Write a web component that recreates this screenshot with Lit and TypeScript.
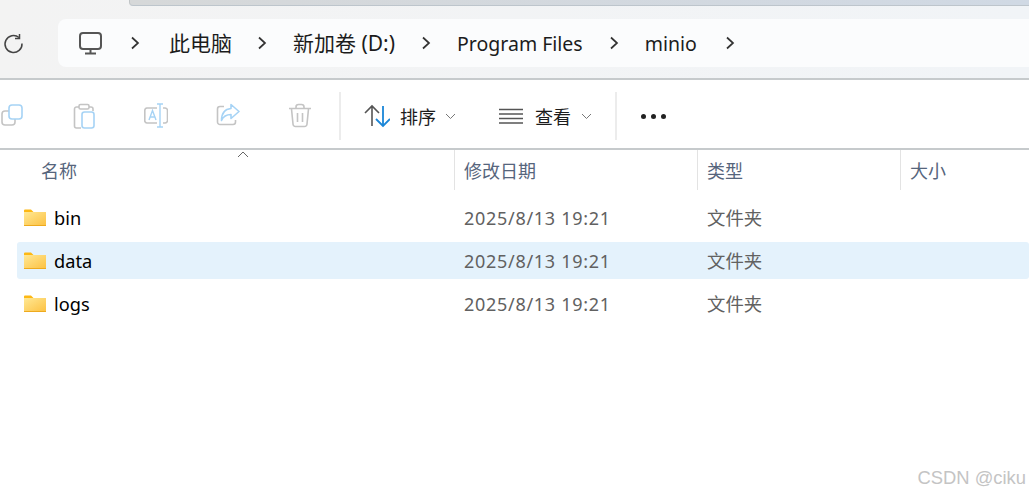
import { css, html, LitElement, svg } from 'lit';
import { customElement } from 'lit/decorators.js';

const files = ['bin', 'data', 'logs'];

const crumbs = [
  { label: '此电脑', cjk: true },
  { label: '新加卷 (D:)', cjk: true },
  { label: 'Program Files', cjk: false },
  { label: 'minio', cjk: false },
];

const chevron = html`<svg class="chevron" width="10" height="14" viewBox="0 0 10 14">
  <path d="M2 1.500 L8 7 L2 12.500" fill="none" stroke="#333" stroke-width="1.700" />
</svg>`;

const caret = html`<svg class="caret" width="11" height="7" viewBox="0 0 11 7">
  <path d="M1 1 L5.500 5.500 L10 1" fill="none" stroke="#777" stroke-width="1" />
</svg>`;

const GREY = '#c4c4c4';
const BLUE = '#a6d3f5';

const toolIcons = [
  svg`<rect x="2" y="8" width="13" height="14" rx="3" fill="none" stroke="${GREY}" stroke-width="1.6"/>
      <rect x="9" y="2" width="13" height="14" rx="3" fill="#fff" stroke="${BLUE}" stroke-width="1.6"/>`,
  svg`<path d="M7 4 H4.500 A2 2 0 0 0 2.500 6 V23 A2 2 0 0 0 4.500 25 H9 M17 4 H19 A2 2 0 0 1 21 6 V8" fill="none" stroke="${GREY}" stroke-width="1.6"/>
      <rect x="7" y="1.500" width="10" height="4.500" rx="1.500" fill="none" stroke="${GREY}" stroke-width="1.6"/>
      <rect x="10" y="9" width="12" height="16" rx="2.500" fill="#fff" stroke="${BLUE}" stroke-width="1.6"/>`,
  svg`<path d="M13 5 H3 A2.500 2.500 0 0 0 .8 7.500 V17 A2.500 2.500 0 0 0 3 20 H13 M19 5 H21 A2.500 2.500 0 0 1 23.500 7.500 V17 A2.500 2.500 0 0 1 21 20 H19" fill="none" stroke="${GREY}" stroke-width="1.6"/>
      <path d="M13 1 H19 M16 1 V24 M13 24 H19 M5 17 L8.500 7.500 L12 17 M6.200 14 H10.800" fill="none" stroke="${BLUE}" stroke-width="1.4"/>`,
  svg`<path d="M8 3.500 H4 A2.500 2.500 0 0 0 1.500 6 V19 A2.500 2.500 0 0 0 4 21.500 H17 A2.500 2.500 0 0 0 19.500 19 V17" fill="none" stroke="${GREY}" stroke-width="1.6"/>
      <path d="M15 1.500 L23 8.500 L15 15.500 V11.500 C10 11.500 7 14 5.500 17.500 C5.500 10.500 9 6 15 5.500 Z" fill="none" stroke="${BLUE}" stroke-width="1.6" stroke-linejoin="round"/>`,
  svg`<path d="M1 5.500 H23 M8 5 V4 A2.500 2.500 0 0 1 10.500 1.500 H13.500 A2.500 2.500 0 0 1 16 4 V5 M3.500 6 L5 21 A2.500 2.500 0 0 0 7.500 23.500 H16.500 A2.500 2.500 0 0 0 19 21 L20.500 6 M9.500 10 V19 M14.500 10 V19" fill="none" stroke="${GREY}" stroke-width="1.6"/>`,
];

const folder = html`<svg class="folder" width="22" height="18" viewBox="0 0 22 18">
  <defs>
    <linearGradient id="folder-fill" x1="0" y1="0" x2="1" y2="1">
      <stop offset="0" stop-color="#ffe894" />
      <stop offset="1" stop-color="#fcc244" />
    </linearGradient>
  </defs>
  <path d="M0 1.500 A1 1 0 0 1 1 .5 H7 L9.500 3 H0 Z" fill="#fdb813" />
  <path d="M0 3 H22 V17 H0 Z" fill="#eeaa1e" />
  <rect x="0" y="3" width="22" height="13" fill="url(#folder-fill)" />
</svg>`;

@customElement('app-root')
export class AppRoot extends LitElement {
  static styles = css`
    :host {
      display: block;
      position: relative;
      width: 1029px;
      height: 495px;
      overflow: hidden;
      background: #fff;
      font-family: 'Noto Sans', 'Noto Sans CJK SC', sans-serif;
      color: #1c1c1c;
    }

    .address-area {
      height: 78px;
      background: linear-gradient(90deg, #f3f3f3, #f1f4f7);
    }

    .tab-edge {
      height: 6px;
      margin-left: 129px;
      box-sizing: border-box;
      background: linear-gradient(90deg, #d6d8d9, #d0d9e4);
      border-bottom: 1px solid #bdc5cc;
      border-left: 1px solid #c0c4c6;
      border-bottom-left-radius: 4px;
    }

    .address-row {
      display: flex;
      align-items: center;
      padding: 13px 0 0 3px;
    }

    .refresh {
      margin-right: 34px;
    }

    .address-bar {
      flex: 1;
      height: 48px;
      display: flex;
      align-items: center;
      padding-left: 21px;
      background: #fbfcfd;
      border-radius: 8px 0 0 8px;
    }

    .pc {
      margin-right: 28px;
    }

    .chevron {
      flex: none;
    }

    .crumb {
      margin: 0 25px 0 29px;
      font-size: 19.500px;
      white-space: nowrap;
    }

    .crumb.cjk {
      font-size: 21px;
      margin-bottom: 2px;
    }

    .crumb:nth-of-type(2),
    .crumb:nth-of-type(3) {
      margin-left: 26px;
      margin-right: 26px;
    }

    .crumb:nth-of-type(4) {
      margin-left: 26px;
      margin-right: 28px;
    }

    .rule {
      height: 2px;
      background: #c6cacc;
    }

    .toolbar {
      height: 68px;
      box-sizing: border-box;
      padding-top: 4px;
      display: flex;
      align-items: center;
      font-size: 18px;
    }

    .tool-icons {
      display: flex;
      gap: 48px;
      width: 339px;
    }

    .divider {
      width: 2px;
      height: 48px;
      background: #ececec;
      flex: none;
    }

    .tool-btn {
      display: flex;
      align-items: center;
    }

    .sort-btn {
      margin-left: 23px;
      width: 251px;
    }

    .sort-btn span {
      margin: 0 9px 0 10px;
    }

    .view-btn span {
      margin: 0 10px 0 12px;
    }

    .sort-btn .group {
      display: flex;
      align-items: center;
      width: 135px;
    }

    .view-btn {
      width: 116px;
    }

    .dots {
      display: flex;
      gap: 5px;
      margin-left: 24px;
    }

    .dots i {
      width: 5px;
      height: 5px;
      border-radius: 50%;
      background: #222;
    }

    .columns {
      display: grid;
      grid-template-columns: 454px 243px 203px 1fr;
    }

    .header {
      height: 40px;
      font-size: 18px;
      color: #56657c;
      position: relative;
    }

    .header div {
      display: flex;
      align-items: center;
      padding-left: 9px;
      border-left: 1px solid #e3e3e3;
    }

    .header div:first-of-type {
      border-left: 0;
      padding-left: 41px;
    }

    .sort-mark {
      position: absolute;
      left: 237px;
      top: 1px;
    }

    .rows {
      padding-top: 9px;
      display: flex;
      flex-direction: column;
      gap: 6px;
      font-size: 18.200px;
    }

    .row {
      height: 37px;
      margin-left: 17px;
      grid-template-columns: 437px 243px 1fr;
      align-items: center;
      border-radius: 3px;
    }

    .row.selected {
      background: #e4f2fc;
    }

    .name {
      display: flex;
      align-items: center;
      gap: 8px;
      padding-left: 7px;
      color: #000;
    }

    .date,
    .type {
      padding-left: 10px;
      color: #616161;
    }

    .date {
      font-size: 18px;
      letter-spacing: 0.700px;
    }

    .type {
      font-size: 18.400px;
      line-height: 24px;
    }

    .watermark {
      position: absolute;
      right: 3px;
      top: 467px;
      font-family: 'Liberation Sans', sans-serif;
      font-size: 18.400px;
      color: #c4c4c4;
    }
  `;

  render() {
    return html`
      <div class="address-area">
        <div class="tab-edge"></div>
        <div class="address-row">
          <svg class="refresh" width="21" height="21" viewBox="0 0 21 21">
            <path d="M16 4.500 A8.500 8.500 0 1 0 19 10.500" fill="none" stroke="#444" stroke-width="1.500" />
            <path d="M16.500 1 V5.500 H12" fill="none" stroke="#444" stroke-width="1.500" />
          </svg>
          <div class="address-bar">
            <svg class="pc" width="23" height="23" viewBox="0 0 23 23">
              <rect x="1" y="1" width="21" height="16" rx="3" fill="none" stroke="#555" stroke-width="2" />
              <path d="M6 21.500 H17 M11.500 17 V21" fill="none" stroke="#555" stroke-width="2" />
            </svg>
            ${chevron}
            ${crumbs.map(
              c => html`<span class="crumb ${c.cjk ? 'cjk' : ''}">${c.label}</span>${chevron}`,
            )}
          </div>
        </div>
      </div>
      <div class="rule"></div>
      <div class="toolbar">
        <div class="tool-icons">
          ${toolIcons.map(
            i => html`<svg width="24" height="26" viewBox="0 0 24 26">${i}</svg>`,
          )}
        </div>
        <div class="divider"></div>
        <div class="tool-btn sort-btn">
          <div class="group">
            <svg width="26" height="24" viewBox="0 0 26 24">
              <path d="M1 9 L8 2 L15 9 M8 2 V22" fill="none" stroke="#555" stroke-width="1.600" />
              <path d="M12 15 L19 22 L26 15 M19 2 V22" fill="none" stroke="#1a86d8" stroke-width="1.800" />
            </svg>
            <span>排序</span>${caret}
          </div>
          <div class="tool-btn view-btn">
            <svg width="24" height="16" viewBox="0 0 24 16">
              <path d="M0 1.500 H24 M0 6 H24 M0 10.500 H24 M0 15 H24" fill="none" stroke="#555" stroke-width="1.300" />
            </svg>
            <span>查看</span>${caret}
          </div>
        </div>
        <div class="divider"></div>
        <div class="dots"><i></i><i></i><i></i></div>
      </div>
      <div class="rule"></div>
      <div class="columns header">
        <div>名称</div>
        <div>修改日期</div>
        <div>类型</div>
        <div>大小</div>
        <svg class="sort-mark" width="12" height="7" viewBox="0 0 12 7">
          <path d="M1 6 L6 1 L11 6" fill="none" stroke="#666" stroke-width="1" />
        </svg>
      </div>
      <div class="rows">
        ${files.map(
          f => html`<div class="columns row ${f === 'data' ? 'selected' : ''}">
            <div class="name">${folder}<span>${f}</span></div>
            <div class="date">2025/8/13 19:21</div>
            <div class="type">文件夹</div>
          </div>`,
        )}
      </div>
      <div class="watermark">CSDN @ciku</div>
    `;
  }
}
